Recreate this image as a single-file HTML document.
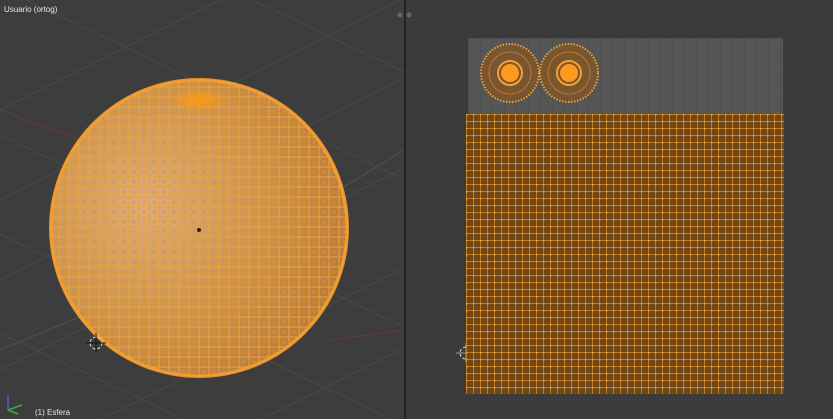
<!DOCTYPE html>
<html><head><meta charset="utf-8"><style>
html,body{margin:0;padding:0;width:833px;height:419px;overflow:hidden;background:#3d3d3d;font-family:"Liberation Sans",sans-serif}
svg{display:block;position:absolute;left:0;top:0}
</style></head><body>
<svg width="833" height="419" viewBox="0 0 833 419" xmlns="http://www.w3.org/2000/svg">
<defs>
<pattern id="sg" x="199" y="227" width="10" height="10" patternUnits="userSpaceOnUse">
<rect width="10" height="10" fill="none" stroke="#f5a030" stroke-width="1.1" opacity="0.9"/>
<circle cx="5" cy="5" r="1.2" fill="#f08a20"/>
</pattern>
<pattern id="og" x="466" y="114" width="7" height="7" patternUnits="userSpaceOnUse">
<rect width="7" height="7" fill="#704818"/>
<rect x="0" y="0" width="7" height="1" fill="#c07a20"/>
<rect x="0" y="0" width="1" height="7" fill="#c07a20"/>
<circle cx="0.5" cy="0.5" r="1.1" fill="#f0a040"/>
</pattern>
<pattern id="ug" x="468" y="38" width="12" height="12" patternUnits="userSpaceOnUse">
<rect width="12" height="12" fill="#565656"/>
<path d="M0 0H12M0 0V12" stroke="#4c4c4c" stroke-width="1"/>
</pattern>
<radialGradient id="sh" cx="0.33" cy="0.42" r="0.75">
<stop offset="0" stop-color="#d8ad80"/>
<stop offset="0.5" stop-color="#c9944f"/>
<stop offset="1" stop-color="#b27436"/>
</radialGradient>
<radialGradient id="pole" cx="0.5" cy="0.5" r="0.5">
<stop offset="0" stop-color="#ff9a10"/>
<stop offset="1" stop-color="#ff9a10" stop-opacity="0"/>
</radialGradient>
<clipPath id="sc"><circle cx="199" cy="228" r="149"/></clipPath>
<clipPath id="lv"><rect x="0" y="0" width="404" height="419"/></clipPath>
</defs>
<rect x="0" y="0" width="404" height="419" fill="#3d3d3d"/>
<rect x="406" y="0" width="427" height="419" fill="#3b3b3b"/>
<g clip-path="url(#lv)" stroke="#4a4a4a" stroke-width="1">
<path d="M-200 40L600 420M-200 140L500 470M-100 -60L700 320M0 -120L800 260M100 -150L800 180M-200 240L400 520"/>
<path d="M-100 420L500 120M-100 330L600 -20M0 470L700 120M100 500L800 150M-100 250L500 -50M-100 160L400 -90M200 520L800 220"/>
</g>
<path d="M0 110L240 200" stroke="#6a3a3a" stroke-width="1"/>
<path d="M0 350L120 300M290 220L404 150" stroke="#3f5f3f" stroke-width="1"/>
<path d="M330 340L404 330" stroke="#6a3a3a" stroke-width="1"/>
<circle cx="199" cy="228" r="150" fill="#e89030"/>
<g clip-path="url(#sc)">
<rect x="40" y="70" width="320" height="320" fill="url(#sh)"/>
<rect x="40" y="70" width="320" height="320" fill="url(#sg)"/>
<ellipse cx="199" cy="100" rx="30" ry="12" fill="url(#pole)"/>
<circle cx="199" cy="228" r="149" fill="none" stroke="#f0a030" stroke-width="5"/>
</g>
<circle cx="199" cy="230" r="2" fill="#222"/>
<g stroke="#ddd" stroke-width="1" fill="none">
<circle cx="96" cy="343" r="6" stroke-dasharray="3 2"/>
<path d="M86 343H106M96 333V353" stroke="#111"/>
<circle cx="466" cy="353" r="6" stroke-dasharray="3 2"/>
<path d="M456 353H476M466 343V363" stroke="#999"/>
</g>
<rect x="404" y="0" width="2" height="419" fill="#222"/>
<circle cx="400" cy="15" r="2.5" fill="#666"/>
<circle cx="409" cy="15" r="2.5" fill="#666"/>
<rect x="468" y="38" width="315" height="76" fill="url(#ug)"/>
<rect x="466" y="114" width="318" height="280" fill="url(#og)"/>
<circle cx="510" cy="73" r="28" fill="#8a5520" opacity="0.7"/>
<circle cx="569" cy="73" r="28" fill="#8a5520" opacity="0.7"/>
<g fill="none" stroke="#f5a030">
<circle cx="510" cy="73" r="29" stroke-dasharray="1.5 1.5" stroke-width="2"/>
<circle cx="510" cy="73" r="21" stroke-width="1" stroke-dasharray="1 1"/>
<circle cx="510" cy="73" r="12" stroke-width="2"/>
<circle cx="569" cy="73" r="29" stroke-dasharray="1.5 1.5" stroke-width="2"/>
<circle cx="569" cy="73" r="21" stroke-width="1" stroke-dasharray="1 1"/>
<circle cx="569" cy="73" r="12" stroke-width="2"/>
</g>
<circle cx="510" cy="73" r="9" fill="#ff9a20"/>
<circle cx="569" cy="73" r="9" fill="#ff9a20"/>
<path d="M8 410L22 405M8 410L18 414" stroke-width="1.5" fill="none" stroke="#4a4"/>
<path d="M8 410L8 395" stroke="#46c" stroke-width="1.5"/>
<text x="4" y="12" font-family="Liberation Sans, sans-serif" font-size="8" fill="#e6e6e6">Usuario (ortog)</text>
<text x="35" y="415" font-family="Liberation Sans, sans-serif" font-size="8" fill="#e6e6e6">(1) Esfera</text>
</svg>
</body></html>
